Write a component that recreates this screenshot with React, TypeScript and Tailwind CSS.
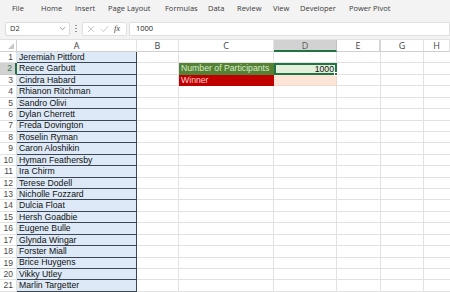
import React from "react";

const names = [
  "Jeremiah Pittford",
  "Reece Garbutt",
  "Cindra Habard",
  "Rhianon Ritchman",
  "Sandro Olivi",
  "Dylan Cherrett",
  "Freda Dovington",
  "Roselin Ryman",
  "Caron Aloshikin",
  "Hyman Feathersby",
  "Ira Chirm",
  "Terese Dodell",
  "Nicholle Fozzard",
  "Dulcia Float",
  "Hersh Goadbie",
  "Eugene Bulle",
  "Glynda Wingar",
  "Forster Miall",
  "Brice Huygens",
  "Vikky Utley",
  "Marlin Targetter",
];

const tabs = ["File", "Home", "Insert", "Page Layout", "Formulas", "Data", "Review", "View", "Developer", "Power Pivot"];
const tabLeft = [12, 41, 75, 108, 165, 208, 237, 273, 300, 349];

const cols = ["A", "B", "C", "D", "E", "G", "H"];

export default function App() {
  return (
    <div className="w-[450px] h-[292px] overflow-hidden bg-white relative" style={{ fontFamily: '"Liberation Sans", Arial, sans-serif' }}>
      {/* Ribbon tabs */}
      <div className="h-[18px] bg-[#f3f3f3] flex items-center text-[7.5px] text-[#3a3a3a]" style={{ fontFamily: '"Open Sans", "Noto Sans", sans-serif' }}>
        {tabs.map((t, i) => (
          <span
            key={t}
            className="whitespace-nowrap"
            style={{ marginLeft: i === 0 ? tabLeft[0] : 0, width: i < tabs.length - 1 ? tabLeft[i + 1] - tabLeft[i] : undefined }}
          >
            {t}
          </span>
        ))}
      </div>
      {/* Formula bar */}
      <div className="h-[22px] bg-[#f3f3f3] flex items-center pl-[5px] border-b border-[#e2e2e2]">
        <div className="w-[65px] h-[14px] bg-white border border-[#dcdcdc] rounded-[2px] flex items-center justify-between pl-[4px] pr-[3px]">
          <span className="text-[7.5px] text-[#333]" style={{ fontFamily: '"Open Sans", sans-serif' }}>D2</span>
          <svg width="7" height="5" viewBox="0 0 7 5"><path d="M1 1.2 L3.5 3.7 L6 1.2" fill="none" stroke="#8a8a8a" strokeWidth="0.9" /></svg>
        </div>
        <div className="w-[12px] flex flex-col items-center gap-[1.5px]">
          <span className="w-[1.3px] h-[1.3px] bg-[#8a8a8a] rounded-full" />
          <span className="w-[1.3px] h-[1.3px] bg-[#8a8a8a] rounded-full" />
          <span className="w-[1.3px] h-[1.3px] bg-[#8a8a8a] rounded-full" />
        </div>
        <div className="w-[45px] h-[14px] bg-white border border-[#e0e0e0] rounded-[2px] flex items-center pl-[4px] gap-[5px]">
          <svg width="8" height="8" viewBox="0 0 8 8"><path d="M1 1 L7 7 M7 1 L1 7" stroke="#c4c4c4" strokeWidth="0.9" /></svg>
          <svg width="9" height="8" viewBox="0 0 9 8"><path d="M1 4.2 L3.4 6.6 L8 1.2" fill="none" stroke="#c4c4c4" strokeWidth="0.9" /></svg>
          <span className="text-[8.5px] italic text-[#444]" style={{ fontFamily: '"Liberation Serif", serif' }}>fx</span>
        </div>
        <div className="ml-[2px] flex-1 h-[14px] bg-white border border-[#e0e0e0] flex items-center pl-[6px]">
          <span className="text-[7.5px] text-[#222]" style={{ fontFamily: '"Open Sans", sans-serif' }}>1000</span>
        </div>
      </div>
      {/* Grid */}
      <div className="grid grid-cols-[17px_120px_42px_95px_63px_44px_43px_26px]">
        {/* header row */}
        <div className="h-[12px] bg-white border-r border-b border-[#d0d0d0] relative">
          <svg className="absolute right-[2px] bottom-[2px]" width="6" height="6" viewBox="0 0 6 6"><path d="M6 0 L6 6 L0 6 Z" fill="#c8c8c8" /></svg>
        </div>
        {cols.map((c) => (
          <div
            key={c}
            className={
              "h-[12px] flex items-center justify-center text-[9px] leading-none border-b " +
              (c === "D"
                ? "bg-[#d2d2d2] text-[#555] border-b-2 border-b-[#217346] border-r border-r-[#c0c0c0]"
                : c === "E"
                ? "bg-white text-[#444] border-[#d0d0d0] border-r-2 border-r-[#d6d6d6]"
                : "bg-white text-[#444] border-[#d0d0d0] border-r border-r-[#e2e2e2]")
            }
            style={{ fontFamily: '"Open Sans", sans-serif' }}
          >
            {c}
          </div>
        ))}
        {names.map((n, i) => {
          const r = i + 1;
          return (
            <React.Fragment key={n}>
              <div
                className={
                  "h-[11.43px] flex items-center justify-end pr-[3px] text-[8.5px] leading-none border-r border-b " +
                  (r === 2 ? "bg-[#d2d2d2] text-[#3c7a52] border-r-2 border-r-[#217346] border-b-[#c8c8c8]" : "bg-white text-[#4a4a4a] border-[#e2e2e2]")
                }
                style={{ fontFamily: '"Liberation Sans", Arial, sans-serif' }}
              >
                {r}
              </div>
              <div className="h-[11.43px] bg-[#dde9f6] border-r border-b border-[#3d4650] flex items-center pl-[2px] text-[8.7px] leading-none text-[#111] whitespace-nowrap overflow-hidden">
                {n}
              </div>
              <div className="h-[11.43px] border-r border-b border-[#e2e2e2]" />
              {r === 2 ? (
                <div className="h-[11.43px] bg-[#548235] border-b border-[#548235] flex items-center pl-[2px] text-[8.7px] leading-none text-[#d6ecc9] whitespace-nowrap overflow-hidden">
                  Number of Participants
                </div>
              ) : r === 3 ? (
                <div className="h-[11.43px] bg-[#c00000] border-b border-[#c00000] flex items-center pl-[2px] text-[8.7px] leading-none text-[#ffd0d0] whitespace-nowrap">
                  Winner
                </div>
              ) : (
                <div className="h-[11.43px] border-r border-b border-[#e2e2e2]" />
              )}
              {r === 2 ? (
                <div className="h-[11.43px] bg-[#e2efda] border-2 border-[#217346] flex items-center justify-end pr-[1px] text-[8.7px] leading-none text-[#111] relative">
                  1000
                  <span className="absolute -right-[3px] -bottom-[3px] w-[4px] h-[4px] bg-[#217346] border border-white" />
                </div>
              ) : r === 3 ? (
                <div className="h-[11.43px] bg-[#fce4d6] border-r border-b border-[#f0d8ca]" />
              ) : (
                <div className="h-[11.43px] border-r border-b border-[#e2e2e2]" />
              )}
              <div className="h-[11.43px] border-r border-b border-[#e2e2e2]" />
              <div className="h-[11.43px] border-r border-b border-[#e2e2e2]" />
              <div className="h-[11.43px] border-b border-[#e2e2e2]" />
            </React.Fragment>
          );
        })}
      </div>
    </div>
  );
}
